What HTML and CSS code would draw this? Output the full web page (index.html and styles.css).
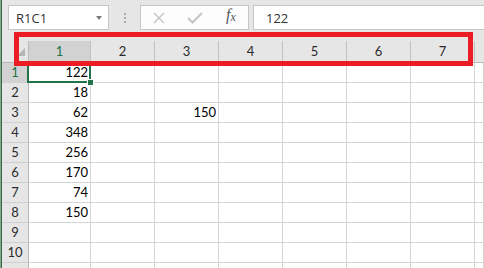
FILE: index.html
```html
<!DOCTYPE html>
<html>
<head>
<meta charset="utf-8">
<link rel="stylesheet" href="styles.css">
</head>
<body>
<div class="app">
  <div class="edge"></div>
  <div class="win">
    <div class="fbar">
      <div class="namebox"><span class="nb-text">R1C1</span><span class="nb-arrow"></span></div>
      <div class="grip"><i></i><i></i><i></i></div>
      <div class="fbtns">
        <span class="fb"><svg width="12" height="12" viewBox="0 0 12 12"><path d="M1 1 L11 11 M11 1 L1 11" stroke="#c4c4c4" stroke-width="1.4" fill="none"/></svg></span>
        <span class="fb"><svg width="16" height="12" viewBox="0 0 16 12"><path d="M1 6 L5.5 10.5 L15 1" stroke="#c4c4c4" stroke-width="2" fill="none"/></svg></span>
        <span class="fb fx"><span class="fx-f">f</span><span class="fx-x">x</span></span>
      </div>
      <div class="finput">122</div>
    </div>
    <div class="sheet">
      <div class="corner"><span class="tri"></span></div>
      <div class="ch sel-h">1</div>
      <div class="ch">2</div>
      <div class="ch">3</div>
      <div class="ch">4</div>
      <div class="ch">5</div>
      <div class="ch">6</div>
      <div class="ch">7</div>
      <div class="ch last"></div>

      <div class="rh sel-h">1</div><div class="c">122</div><div class="c"></div><div class="c"></div><div class="c"></div><div class="c"></div><div class="c"></div><div class="c"></div><div class="c"></div>
      <div class="rh">2</div><div class="c">18</div><div class="c"></div><div class="c"></div><div class="c"></div><div class="c"></div><div class="c"></div><div class="c"></div><div class="c"></div>
      <div class="rh">3</div><div class="c">62</div><div class="c"></div><div class="c">150</div><div class="c"></div><div class="c"></div><div class="c"></div><div class="c"></div><div class="c"></div>
      <div class="rh">4</div><div class="c">348</div><div class="c"></div><div class="c"></div><div class="c"></div><div class="c"></div><div class="c"></div><div class="c"></div><div class="c"></div>
      <div class="rh">5</div><div class="c">256</div><div class="c"></div><div class="c"></div><div class="c"></div><div class="c"></div><div class="c"></div><div class="c"></div><div class="c"></div>
      <div class="rh">6</div><div class="c">170</div><div class="c"></div><div class="c"></div><div class="c"></div><div class="c"></div><div class="c"></div><div class="c"></div><div class="c"></div>
      <div class="rh">7</div><div class="c">74</div><div class="c"></div><div class="c"></div><div class="c"></div><div class="c"></div><div class="c"></div><div class="c"></div><div class="c"></div>
      <div class="rh">8</div><div class="c">150</div><div class="c"></div><div class="c"></div><div class="c"></div><div class="c"></div><div class="c"></div><div class="c"></div><div class="c"></div>
      <div class="rh">9</div><div class="c"></div><div class="c"></div><div class="c"></div><div class="c"></div><div class="c"></div><div class="c"></div><div class="c"></div><div class="c"></div>
      <div class="rh">10</div><div class="c"></div><div class="c"></div><div class="c"></div><div class="c"></div><div class="c"></div><div class="c"></div><div class="c"></div><div class="c"></div>
      <div class="rh"></div><div class="c"></div><div class="c"></div><div class="c"></div><div class="c"></div><div class="c"></div><div class="c"></div><div class="c"></div><div class="c"></div>
    </div>
  </div>
  <div class="selbox"><span class="handle"></span></div>
  <div class="annot"></div>
</div>
</body>
</html>
```

FILE: styles.css
```css
html, body {
  margin: 0;
  padding: 0;
  background: #ffffff;
}

.app {
  position: relative;
  width: 484px;
  height: 268px;
  overflow: hidden;
  display: flex;
  font-family: "Lato", "Liberation Sans", sans-serif;
}

.edge {
  width: 2px;
  flex: none;
  background: linear-gradient(to right, #8aa58f 0, #8aa58f 1px, #2f6e45 1px);
}

.win {
  flex: 1;
  min-width: 0;
  display: flex;
  flex-direction: column;
  overflow: hidden;
}

/* formula bar */
.fbar {
  height: 41px;
  flex: none;
  box-sizing: border-box;
  padding: 5px 0 0 6px;
  background: #e6e6e6;
  display: flex;
  align-items: flex-start;
}

.namebox {
  width: 101px;
  height: 25px;
  box-sizing: border-box;
  border: 1px solid #c6c6c6;
  background: #ffffff;
  display: flex;
  align-items: center;
  justify-content: space-between;
  padding: 0 6px 0 7px;
  font-family: "Open Sans", "Liberation Sans", sans-serif;
  font-size: 13px;
  color: #333333;
}

.nb-arrow {
  width: 0;
  height: 0;
  border-left: 3.5px solid transparent;
  border-right: 3.5px solid transparent;
  border-top: 4px solid #7a7a7a;
  margin-top: 1px;
}

.grip {
  width: 31px;
  height: 25px;
  display: flex;
  flex-direction: column;
  align-items: center;
  justify-content: center;
  gap: 2px;
}

.grip i {
  display: block;
  width: 2px;
  height: 2px;
  background: #ababab;
}

.fbtns {
  width: 109px;
  height: 25px;
  box-sizing: border-box;
  border: 1px solid #c6c6c6;
  background: #fdfdfd;
  display: grid;
  grid-template-columns: 35px 38px 34px;
  align-items: center;
}

.fb {
  display: flex;
  justify-content: center;
  align-items: center;
  height: 23px;
}

.fx {
  font-family: "Liberation Serif", "DejaVu Serif", serif;
  font-style: italic;
  color: #555555;
  align-items: baseline;
  padding-top: 1px;
}

.fx-f {
  font-size: 16px;
  line-height: 16px;
}

.fx-x {
  font-size: 12px;
  line-height: 12px;
  position: relative;
  top: 1px;
}

.finput {
  flex: 1;
  height: 25px;
  box-sizing: border-box;
  margin-left: 4px;
  margin-right: -2px;
  border: 1px solid #c6c6c6;
  background: #ffffff;
  display: flex;
  align-items: center;
  padding-left: 12px;
  font-family: "Open Sans", "Liberation Sans", sans-serif;
  font-size: 13px;
  color: #333333;
}

/* sheet grid */
.sheet {
  flex: 1;
  display: grid;
  grid-template-columns: 27px 62px repeat(6, 64px) 1fr;
  grid-template-rows: 22px;
  grid-auto-rows: 20px;
  font-size: 13px;
  background: #ffffff;
}

.corner {
  background: #e6e6e6;
  border-right: 1px solid #b8b8b8;
  border-bottom: 1px solid #b8b8b8;
  position: relative;
  display: flex;
  justify-content: flex-end;
  align-items: flex-end;
  padding: 0 3px 6px 0;
}

.tri {
  width: 0;
  height: 0;
  border-left: 8px solid transparent;
  border-bottom: 8px solid #b5b5b5;
}

.ch {
  background: #e6e6e6;
  border-right: 1px solid #c2c2c2;
  border-bottom: 1px solid #b8b8b8;
  text-align: center;
  line-height: 21px;
  color: #2b2b2b;
}

.ch.last {
  border-right: none;
}

.rh {
  background: #e6e6e6;
  border-right: 1px solid #b8b8b8;
  border-bottom: 1px solid #cfcfcf;
  text-align: center;
  line-height: 19px;
  color: #2b2b2b;
}

.sel-h {
  background: #d2d2d2;
  color: #217346;
}

.c {
  border-right: 1px solid #d4d4d4;
  border-bottom: 1px solid #d4d4d4;
  text-align: right;
  padding-right: 2px;
  line-height: 19px;
  color: #000000;
}

/* overlays */
.selbox {
  position: absolute;
  left: 27px;
  top: 61px;
  width: 64px;
  height: 22px;
  box-sizing: border-box;
  border: 2px solid #217346;
}

.handle {
  position: absolute;
  right: -5px;
  bottom: -5px;
  width: 5px;
  height: 5px;
  background: #217346;
  border: 1px solid #ffffff;
}

.annot {
  position: absolute;
  left: 14px;
  top: 32px;
  width: 459px;
  height: 34px;
  box-sizing: border-box;
  border: 5px solid #ec1c24;
}
```
